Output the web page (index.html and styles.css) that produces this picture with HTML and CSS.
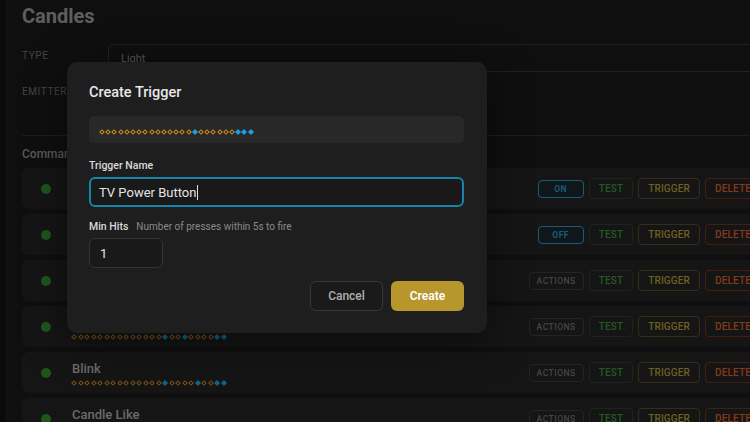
FILE: index.html
```html
<!DOCTYPE html>
<html lang="en">
<head>
<meta charset="utf-8">
<title>Candles</title>
<link rel="stylesheet" href="styles.css">
</head>
<body>
<div class="app">
  <aside class="rail"></aside>
  <main class="content">
    <h1 class="title">Candles</h1>
    <div class="form">
      <div class="form-row">
        <div class="form-label">Type</div>
        <div class="field">Light</div>
      </div>
      <div class="form-row">
        <div class="form-label">Emitter</div>
        <div class="field-empty"></div>
      </div>
    </div>
    <hr class="divider">
    <h2 class="section">Commands</h2>
    <ul class="commands">
      <li class="cmd">
        <span class="dot"></span>
        <div class="cmd-info">
          <div class="cmd-name">Power On</div>
          <div class="signal"><i class="d"></i><i class="d"></i><i class="d"></i><i class="d"></i><i class="d"></i><i class="d"></i><i class="d"></i><i class="d"></i><i class="d"></i><i class="d"></i><i class="d"></i><i class="d"></i><i class="d"></i><i class="d"></i><i class="d b"></i><i class="d"></i><i class="d"></i><i class="d"></i><i class="d"></i><i class="d"></i><i class="d"></i><i class="d b"></i><i class="d b"></i><i class="d b"></i></div>
        </div>
        <div class="cmd-actions">
          <button class="btn small toggle">On</button>
          <button class="btn test">Test</button>
          <button class="btn trigger">Trigger</button>
          <button class="btn delete">Delete</button>
        </div>
      </li>
      <li class="cmd">
        <span class="dot"></span>
        <div class="cmd-info">
          <div class="cmd-name">Power Off</div>
          <div class="signal"><i class="d"></i><i class="d"></i><i class="d"></i><i class="d"></i><i class="d"></i><i class="d"></i><i class="d"></i><i class="d"></i><i class="d"></i><i class="d"></i><i class="d"></i><i class="d"></i><i class="d"></i><i class="d"></i><i class="d b"></i><i class="d"></i><i class="d"></i><i class="d"></i><i class="d"></i><i class="d b"></i><i class="d"></i><i class="d"></i><i class="d b"></i><i class="d b"></i></div>
        </div>
        <div class="cmd-actions">
          <button class="btn small toggle">Off</button>
          <button class="btn test">Test</button>
          <button class="btn trigger">Trigger</button>
          <button class="btn delete">Delete</button>
        </div>
      </li>
      <li class="cmd">
        <span class="dot"></span>
        <div class="cmd-info">
          <div class="cmd-name">Steady</div>
          <div class="signal"><i class="d"></i><i class="d"></i><i class="d"></i><i class="d"></i><i class="d"></i><i class="d"></i><i class="d"></i><i class="d"></i><i class="d"></i><i class="d"></i><i class="d"></i><i class="d"></i><i class="d"></i><i class="d"></i><i class="d b"></i><i class="d b"></i><i class="d"></i><i class="d"></i><i class="d"></i><i class="d"></i><i class="d"></i><i class="d"></i><i class="d b"></i><i class="d b"></i></div>
        </div>
        <div class="cmd-actions">
          <button class="btn small">Actions</button>
          <button class="btn test">Test</button>
          <button class="btn trigger">Trigger</button>
          <button class="btn delete">Delete</button>
        </div>
      </li>
      <li class="cmd">
        <span class="dot"></span>
        <div class="cmd-info">
          <div class="cmd-name">Flicker</div>
          <div class="signal"><i class="d"></i><i class="d"></i><i class="d"></i><i class="d"></i><i class="d"></i><i class="d"></i><i class="d"></i><i class="d"></i><i class="d"></i><i class="d"></i><i class="d"></i><i class="d"></i><i class="d"></i><i class="d"></i><i class="d b"></i><i class="d"></i><i class="d"></i><i class="d b"></i><i class="d"></i><i class="d"></i><i class="d"></i><i class="d"></i><i class="d b"></i><i class="d b"></i></div>
        </div>
        <div class="cmd-actions">
          <button class="btn small">Actions</button>
          <button class="btn test">Test</button>
          <button class="btn trigger">Trigger</button>
          <button class="btn delete">Delete</button>
        </div>
      </li>
      <li class="cmd">
        <span class="dot"></span>
        <div class="cmd-info">
          <div class="cmd-name">Blink</div>
          <div class="signal"><i class="d"></i><i class="d"></i><i class="d"></i><i class="d"></i><i class="d"></i><i class="d"></i><i class="d"></i><i class="d"></i><i class="d"></i><i class="d"></i><i class="d"></i><i class="d"></i><i class="d"></i><i class="d"></i><i class="d b"></i><i class="d"></i><i class="d"></i><i class="d"></i><i class="d"></i><i class="d b"></i><i class="d"></i><i class="d"></i><i class="d b"></i><i class="d b"></i></div>
        </div>
        <div class="cmd-actions">
          <button class="btn small">Actions</button>
          <button class="btn test">Test</button>
          <button class="btn trigger">Trigger</button>
          <button class="btn delete">Delete</button>
        </div>
      </li>
      <li class="cmd">
        <span class="dot"></span>
        <div class="cmd-info">
          <div class="cmd-name">Candle Like</div>
          <div class="signal"><i class="d"></i><i class="d"></i><i class="d"></i><i class="d"></i><i class="d"></i><i class="d"></i><i class="d"></i><i class="d"></i><i class="d"></i><i class="d"></i><i class="d"></i><i class="d"></i><i class="d"></i><i class="d"></i><i class="d b"></i><i class="d"></i><i class="d b"></i><i class="d"></i><i class="d"></i><i class="d"></i><i class="d"></i><i class="d"></i><i class="d b"></i><i class="d b"></i></div>
        </div>
        <div class="cmd-actions">
          <button class="btn small">Actions</button>
          <button class="btn test">Test</button>
          <button class="btn trigger">Trigger</button>
          <button class="btn delete">Delete</button>
        </div>
      </li>
    </ul>
  </main>

  <div class="modal">
    <h3 class="modal-title">Create Trigger</h3>
    <div class="modal-signal"><i class="d"></i><i class="d"></i><i class="d"></i><i class="d"></i><i class="d"></i><i class="d"></i><i class="d"></i><i class="d"></i><i class="d"></i><i class="d"></i><i class="d"></i><i class="d"></i><i class="d"></i><i class="d"></i><i class="d"></i><i class="d b"></i><i class="d"></i><i class="d"></i><i class="d"></i><i class="d"></i><i class="d"></i><i class="d"></i><i class="d b"></i><i class="d b"></i><i class="d b"></i></div>
    <div class="label">Trigger Name</div>
    <div class="input focused">TV Power Button<span class="caret"></span></div>
    <div class="label second"><span>Min Hits</span><span class="hint">Number of presses within 5s to fire</span></div>
    <div class="input small">1</div>
    <div class="modal-actions">
      <button class="mbtn cancel">Cancel</button>
      <button class="mbtn create">Create</button>
    </div>
  </div>
</div>
</body>
</html>
```

FILE: styles.css
```css
* { box-sizing: border-box; }

html, body {
  margin: 0;
  height: 100%;
  overflow: hidden;
  background: #0f0f0f;
  font-family: Roboto, "Noto Sans", "Liberation Sans", sans-serif;
}

.app {
  display: flex;
  width: 750px;
  height: 422px;
  overflow: hidden;
  position: relative;
}

.rail {
  flex: 0 0 7px;
  background: #0a0a0a;
  border-right: 1px solid #131313;
}

.content {
  flex: 0 0 772px;
  padding-left: 15px;
}

.title {
  margin: 0;
  padding-top: 4px;
  font-size: 20px;
  line-height: 24px;
  font-weight: 700;
  color: #5e5e5e;
}

.form {
  margin-top: 16px;
  display: flex;
  flex-direction: column;
  gap: 8px;
}

.form-row {
  display: grid;
  grid-template-columns: 86px 1fr;
}

.form-label {
  padding-top: 6px;
  font-size: 10px;
  line-height: 12px;
  letter-spacing: 0.6px;
  text-transform: uppercase;
  color: #454545;
}

.field {
  height: 28px;
  border: 1px solid #212121;
  border-radius: 4px;
  padding: 0 12px;
  display: flex;
  align-items: center;
  font-size: 11px;
  color: #575757;
}

.field-empty { height: 40px; }

.divider {
  margin: 15px 0 0;
  border: 0;
  border-top: 1px solid #1e1e1e;
}

.section {
  margin: 10px 0 0;
  font-size: 12px;
  line-height: 16px;
  font-weight: 500;
  color: #5a5a5a;
}

.commands {
  list-style: none;
  margin: 6px 0 0;
  padding: 0;
  display: flex;
  flex-direction: column;
  gap: 5px;
}

.cmd {
  flex: none;
  height: 41px;
  background: #151515;
  border-radius: 6px;
  display: flex;
  align-items: center;
  padding: 0 18px 0 19px;
}

.dot {
  flex: none;
  width: 10px;
  height: 10px;
  border-radius: 50%;
  background: #1e561e;
}

.cmd-info { margin-left: 21px; }

.cmd-name {
  font-size: 13px;
  line-height: 16px;
  font-weight: 500;
  color: #6b6b6b;
}

.signal {
  display: flex;
  gap: 2.5px;
  height: 4px;
  margin-top: 4px;
}

.d {
  flex: none;
  display: block;
  width: 4px;
  height: 4px;
  border: 1px solid #7a5319;
  transform: rotate(45deg);
}

.signal .d.b {
  background: #0f6688;
  border-color: #0f6688;
}

.cmd-actions {
  margin-left: auto;
  display: flex;
  align-items: center;
  gap: 5px;
}

.btn {
  font-family: inherit;
  height: 21px;
  padding: 0 9px;
  border: 1px solid;
  border-radius: 4px;
  background: transparent;
  font-size: 10px;
  font-weight: 500;
  letter-spacing: 0.15px;
  text-transform: uppercase;
}

.btn.small {
  height: 18px;
  padding: 0 7px;
  font-size: 8.5px;
  letter-spacing: 0.5px;
  border-color: #242424;
  color: #464646;
}

.btn.toggle {
  width: 46px;
  padding: 0;
  font-weight: 700;
  border-color: #1b5a77;
  color: #1a5a78;
  background: #0f171b;
}

.btn.test { border-color: #1a261a; color: #245a24; }
.btn.trigger { border-color: #352e17; color: #6f6022; }
.btn.delete { border-color: #42200f; color: #853a19; }

/* Modal */
.modal {
  position: absolute;
  left: 67px;
  top: 62px;
  width: 420px;
  padding: 21px 23px 22px 22px;
  background: #1e1e1e;
  border-radius: 10px;
  box-shadow: 0 8px 40px rgba(0, 0, 0, 0.5);
}

.modal-title {
  margin: 0;
  font-size: 14.5px;
  line-height: 20px;
  font-weight: 500;
  color: #e8e8e8;
}

.modal-signal {
  margin-top: 13px;
  height: 27px;
  background: #282828;
  border-radius: 5px;
  padding: 14px 11px 0;
  display: flex;
  align-items: flex-start;
  gap: 2.2px;
}

.modal-signal .d { border-color: #d4901e; }
.modal-signal .d.b { background: #1ba0dc; border-color: #1ba0dc; }

.label {
  margin-top: 16px;
  display: flex;
  align-items: baseline;
  gap: 8px;
  font-size: 10.5px;
  line-height: 14px;
  font-weight: 500;
  color: #dadada;
}

.label.second { margin-top: 13px; }

.hint {
  font-size: 10px;
  font-weight: 400;
  color: #8a8a8a;
}

.input {
  margin-top: 4px;
  height: 30px;
  border-radius: 6px;
  background: #191919;
  display: flex;
  align-items: center;
  font-size: 13px;
  color: #e4e4e4;
}

.input.focused {
  border: 2px solid #1683ad;
  padding: 0 8px;
}

.input.small {
  width: 74px;
  border: 1px solid #343434;
  padding: 0 10px;
}

.caret {
  width: 1px;
  height: 15px;
  margin-left: 1px;
  background: #e0e0e0;
}

.modal-actions {
  margin-top: 13px;
  display: flex;
  justify-content: flex-end;
  gap: 8px;
}

.mbtn {
  font-family: inherit;
  width: 73px;
  height: 30px;
  border-radius: 6px;
  font-size: 12px;
  font-weight: 500;
}

.cancel {
  background: #1a1a1a;
  border: 1px solid #383838;
  color: #b0b0b0;
}

.create {
  background: #b8962e;
  border: 0;
  color: #ffffff;
  font-weight: 600;
}
```
